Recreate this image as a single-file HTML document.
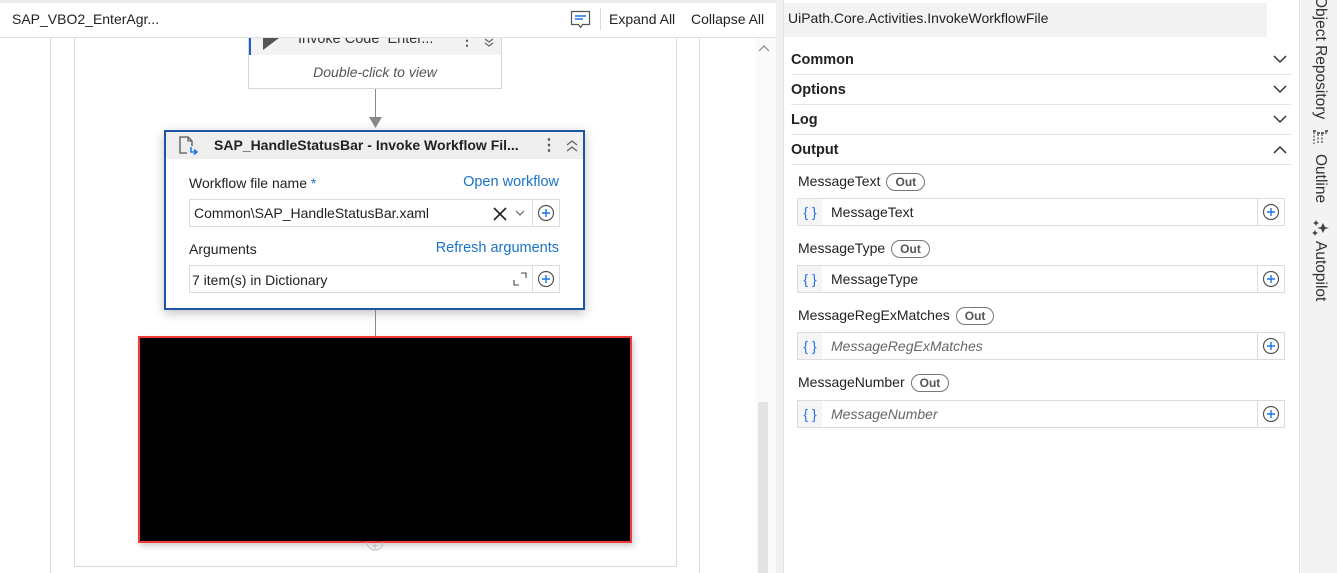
<!DOCTYPE html>
<html><head><meta charset="utf-8"><style>
*{box-sizing:border-box;margin:0;padding:0}
body{width:1337px;height:573px;overflow:hidden;background:#fff;font-family:"Liberation Sans",sans-serif;font-size:14px;color:#222;position:relative}
.a{position:absolute}
.vl{position:absolute;width:1px;background:#d3dde6}
.plus{position:absolute;width:27px;border-left:1px solid #ddd;display:flex;align-items:center;justify-content:center}
.inp{position:absolute;border:1px solid #dcdcdc;background:#fff}
.lbl{position:absolute;font-size:14px;color:#222}
.pill{display:inline-block;border:1.3px solid #777;border-radius:10px;font-size:12px;font-weight:bold;color:#555;padding:1px 8px;margin-left:6px;vertical-align:middle}
.sec{position:absolute;left:791px;width:500px;height:30px;border-bottom:1px solid #e4e4e4;font-weight:bold;font-size:14.5px;line-height:30px}
.sec svg{position:absolute;right:4px;top:10px}
.brace{position:absolute;left:0;top:0;bottom:0;width:24px;background:#f5f5f5;color:#1a73e8;font-size:14px;text-align:center}
.vt{position:absolute;left:1309px;writing-mode:vertical-rl;white-space:nowrap;font-size:15.5px;color:#333;line-height:22px}
</style></head><body>
<svg width="0" height="0" style="position:absolute"><defs>
<symbol id="pl" viewBox="0 0 18 18"><circle cx="9" cy="9" r="7.5" fill="none" stroke="#555" stroke-width="1.2"/><path d="M9 5v8M5 9h8" stroke="#1a73e8" stroke-width="1.4"/></symbol>
</defs></svg>

<div class="a" style="left:0;top:0;width:776px;height:3px;background:#ececec"></div>
<div class="a" style="left:0;top:3px;width:776px;height:35px;background:#fff;border-bottom:1px solid #dde2e6"></div>
<div class="a" style="left:12px;top:11px;font-size:14px">SAP_VBO2_EnterAgr...</div>
<svg class="a" style="left:570px;top:10px" width="21" height="21" viewBox="0 0 21 21"><path d="M1.5 1.5h18v13h-7l-2 3-2-3h-7z" fill="none" stroke="#555" stroke-width="1.2"/><path d="M5 6h11M5 9h8" stroke="#1a73e8" stroke-width="1.6"/></svg>
<div class="a" style="left:600px;top:8px;width:1px;height:22px;background:#ddd"></div>
<div class="a" style="left:609px;top:11px">Expand All</div>
<div class="a" style="left:691px;top:11px">Collapse All</div>

<div class="vl" style="left:50px;top:38px;height:535px"></div>
<div class="vl" style="left:74px;top:38px;height:529px"></div>
<div class="vl" style="left:676px;top:38px;height:529px"></div>
<div class="vl" style="left:699px;top:38px;height:535px"></div>
<div class="a" style="left:74px;top:566px;width:603px;height:1px;background:#d3dde6"></div>

<div class="a" style="left:756px;top:38px;width:20px;height:535px;background:#fafafa"></div>
<svg class="a" style="left:758px;top:44px" width="12" height="8"><path d="M1 7l5-5 5 5" fill="none" stroke="#888" stroke-width="1.2"/></svg>
<div class="a" style="left:758px;top:402px;width:10px;height:171px;background:#e4e4e4"></div>
<div class="a" style="left:776px;top:0;width:7px;height:573px;background:#f0f0f0"></div>

<div class="a" style="left:248px;top:38px;width:254px;height:51px;border:1px solid #d6d6d6;border-top:none;background:#fff;overflow:hidden">
  <div class="a" style="left:0;top:0;width:254px;height:17px;background:#f3f3f3;border-left:2px solid #1a5fd0"></div>
  <svg class="a" style="left:14px;top:0" width="16" height="12"><path d="M0 0h16L0 12z" fill="#555"/></svg>
  <div class="a" style="left:49px;top:-7px;font-size:14.5px;color:#333">Invoke Code&nbsp; Enter...</div>
  <div class="a" style="left:211px;top:-6px;color:#555;font-weight:bold">⋮</div>
  <svg class="a" style="left:234px;top:0" width="12" height="10"><path d="M2 1l4 3 4-3M2 5l4 3 4-3" fill="none" stroke="#666" stroke-width="1.2"/></svg>
  <div class="a" style="left:0;top:26px;width:252px;text-align:center;font-style:italic;color:#555;font-size:14px">Double-click to view</div>
</div>
<div class="a" style="left:375px;top:89px;width:1px;height:30px;background:#888"></div>
<svg class="a" style="left:369px;top:117px" width="13" height="11"><path d="M0 0h13L6.5 11z" fill="#888"/></svg>

<div class="a" style="left:164px;top:130px;width:421px;height:180px;border:2px solid #1c55a3;background:#fff;box-shadow:0 3px 10px rgba(0,0,0,.25)">
  <div class="a" style="left:0;top:0;width:417px;height:27px;background:#eeeeee"></div>
  <svg class="a" style="left:12px;top:4px" width="20" height="20" viewBox="0 0 20 20"><path d="M9 17H2V1h8l4 4v5" fill="none" stroke="#555" stroke-width="1.3"/><path d="M10 1v4h4" fill="none" stroke="#555" stroke-width="1.1"/><path d="M13 11v5h6M16 13.5l3 2.5-3 2.5" fill="none" stroke="#1a73e8" stroke-width="1.5"/></svg>
  <div class="a" style="left:48px;top:5px;font-weight:bold;font-size:14px;color:#222">SAP_HandleStatusBar - Invoke Workflow Fil...</div>
  <div class="a" style="left:375px;top:3px;font-weight:bold;color:#555;font-size:16px">⋮</div>
  <svg class="a" style="left:399px;top:7px" width="14" height="14"><path d="M2 6l5-4 5 4M2 12l5-4 5 4" fill="none" stroke="#666" stroke-width="1.4"/></svg>
  <div class="a" style="left:23px;top:43px">Workflow file name <span style="color:#1a73c8">*</span></div>
  <div class="a" style="right:24px;top:42px;color:#1a73c8;font-size:14.5px">Open workflow</div>
  <div class="inp" style="left:23px;top:67px;width:371px;height:28px">
    <div class="a" style="left:4px;top:5px">Common\SAP_HandleStatusBar.xaml</div>
    <svg class="a" style="left:303px;top:7px" width="14" height="14"><path d="M1 1l12 12M13 1L1 13" stroke="#222" stroke-width="1.6"/></svg>
    <svg class="a" style="left:325px;top:10px" width="10" height="7"><path d="M1 1l4 4 4-4" fill="none" stroke="#666" stroke-width="1.2"/></svg>
    <div class="plus" style="left:342px;top:0;height:26px"><svg width="18" height="18"><use href="#pl"/></svg></div>
  </div>
  <div class="a" style="left:23px;top:109px">Arguments</div>
  <div class="a" style="right:24px;top:108px;color:#1a73c8;font-size:14.5px">Refresh arguments</div>
  <div class="inp" style="left:23px;top:133px;width:371px;height:28px">
    <div class="a" style="left:2px;top:6px">7 item(s) in Dictionary</div>
    <svg class="a" style="left:323px;top:6px" width="14" height="14"><path d="M1 8v5h5M8 1h5v5" fill="none" stroke="#444" stroke-width="1.1"/></svg>
    <div class="plus" style="left:342px;top:0;height:26px"><svg width="18" height="18"><use href="#pl"/></svg></div>
  </div>
</div>
<div class="a" style="left:375px;top:310px;width:1px;height:27px;background:#888"></div>

<div class="a" style="left:138px;top:336px;width:494px;height:207px;background:#000;border:2px solid #f03a3a;box-shadow:2px 3px 6px rgba(0,0,0,.2)"></div>
<svg class="a" style="left:366px;top:538px" width="18" height="14"><path d="M1 4a8 8 0 0 0 16 0" fill="none" stroke="#bbb"/><path d="M9 5v6M6 8h6" stroke="#bbb"/></svg>

<div class="a" style="left:783px;top:0;width:516px;height:573px;background:#fff;border-left:1px solid #e0e0e0"></div>
<div class="a" style="left:784px;top:3px;width:483px;height:34px;background:#f3f3f3"></div>
<div class="a" style="left:788px;top:10px;font-size:14px;color:#222">UiPath.Core.Activities.InvokeWorkflowFile</div>

<div class="sec" style="top:45px">Common<svg width="14" height="9"><path d="M1 1l6 6 6-6" fill="none" stroke="#333" stroke-width="1.5"/></svg></div>
<div class="sec" style="top:75px">Options<svg width="14" height="9"><path d="M1 1l6 6 6-6" fill="none" stroke="#333" stroke-width="1.5"/></svg></div>
<div class="sec" style="top:105px">Log<svg width="14" height="9"><path d="M1 1l6 6 6-6" fill="none" stroke="#333" stroke-width="1.5"/></svg></div>
<div class="sec" style="top:135px">Output<svg width="14" height="9"><path d="M1 8l6-6 6 6" fill="none" stroke="#333" stroke-width="1.5"/></svg></div>

<div class="lbl" style="left:798px;top:173px">MessageText<span class="pill">Out</span></div>
<div class="inp" style="left:797px;top:198px;width:488px;height:28px"><div class="brace" style="line-height:26px">{ }</div><div class="a" style="left:33px;top:5px">MessageText</div><div class="plus" style="left:459px;top:0;height:26px"><svg width="18" height="18"><use href="#pl"/></svg></div></div>

<div class="lbl" style="left:798px;top:240px">MessageType<span class="pill">Out</span></div>
<div class="inp" style="left:797px;top:265px;width:488px;height:28px"><div class="brace" style="line-height:26px">{ }</div><div class="a" style="left:33px;top:5px">MessageType</div><div class="plus" style="left:459px;top:0;height:26px"><svg width="18" height="18"><use href="#pl"/></svg></div></div>

<div class="lbl" style="left:798px;top:307px">MessageRegExMatches<span class="pill">Out</span></div>
<div class="inp" style="left:797px;top:332px;width:488px;height:28px"><div class="brace" style="line-height:26px">{ }</div><div class="a" style="left:33px;top:5px;font-style:italic;color:#666">MessageRegExMatches</div><div class="plus" style="left:459px;top:0;height:26px"><svg width="18" height="18"><use href="#pl"/></svg></div></div>

<div class="lbl" style="left:798px;top:374px">MessageNumber<span class="pill">Out</span></div>
<div class="inp" style="left:797px;top:400px;width:488px;height:28px"><div class="brace" style="line-height:26px">{ }</div><div class="a" style="left:33px;top:5px;font-style:italic;color:#666">MessageNumber</div><div class="plus" style="left:459px;top:0;height:26px"><svg width="18" height="18"><use href="#pl"/></svg></div></div>

<div class="a" style="left:1299px;top:0;width:38px;height:573px;background:#f3f3f3;border-left:1px solid #e2e2e2"></div>
<div class="vt" style="top:-4px">Object Repository</div>
<svg class="a" style="left:1312px;top:130px" width="16" height="16"><path d="M2 2v12M6 4v10M10 4v10M14 2v2" stroke="#555" stroke-width="1.3" stroke-dasharray="2 1.5"/><path d="M1 1h3M5 3h3M9 3h3M13 1h3" stroke="#333" stroke-width="1.6"/></svg>
<div class="vt" style="top:154px">Outline</div>
<svg class="a" style="left:1311px;top:219px" width="20" height="18" viewBox="0 0 20 18"><path d="M12 4l2 4 4 1-4 1-2 4-2-4-4-1 4-1z" fill="#444"/><path d="M5 1l1 2 2 1-2 1-1 2-1-2-2-1 2-1zM4 11l1 2 2 1-2 1-1 2-1-2-2-1 2-1z" fill="#444"/></svg>
<div class="vt" style="top:241px">Autopilot</div>
</body></html>
